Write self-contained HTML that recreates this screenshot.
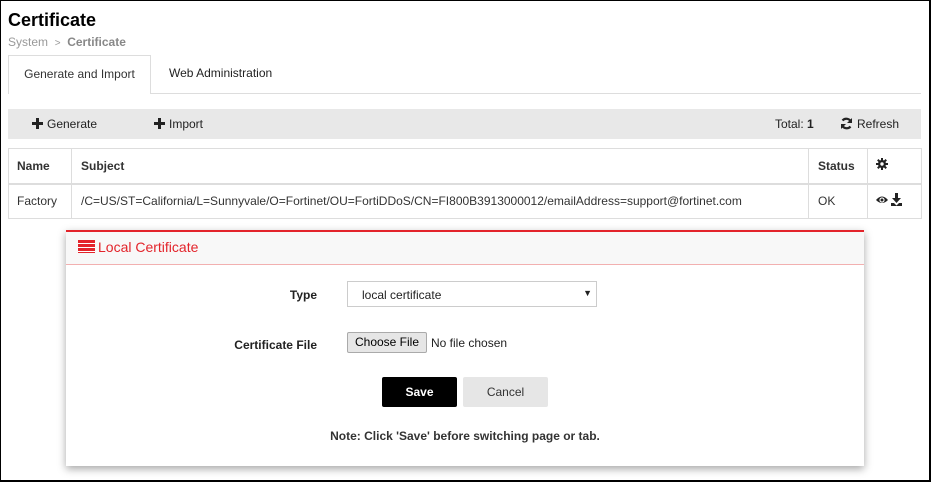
<!DOCTYPE html><html><head><style>
*{box-sizing:border-box;margin:0;padding:0}
body{width:935px;height:486px;background:#fff;font-family:"Liberation Sans",Arial,sans-serif;font-size:12px;color:#333;position:relative;overflow:hidden}
.frame{position:absolute;left:0;top:0;width:931px;height:482px;border:1px solid #000;border-width:1px 2px 2px 1px}
.a{position:absolute}
</style></head><body>
<div class="frame"></div>
<div class="a" style="left:8px;top:10px;font-size:18px;font-weight:bold;color:#000">Certificate</div>
<div class="a" style="left:8px;top:35px;font-size:12px;color:#999">System &nbsp;<span style="font-size:10px">&gt;</span>&nbsp; <b style="color:#888">Certificate</b></div>
<div class="a" style="left:8px;top:93px;width:913px;border-top:1px solid #ddd"></div>
<div class="a" style="left:8px;top:55px;width:143px;height:39px;border:1px solid #ddd;border-bottom:none;background:#fff;text-align:center;line-height:37px;color:#333">Generate and Import</div>
<div class="a" style="left:169px;top:55px;line-height:37px;color:#222">Web Administration</div>
<div class="a" style="left:8px;top:109px;width:913px;height:30px;background:#e8e8e8"></div>
<svg class="a" style="left:32px;top:118px" width="11" height="11"><path d="M4 0h3v4h4v3H7v4H4V7H0V4h4z" fill="#222"/></svg>
<div class="a" style="left:47px;top:117px;color:#222">Generate</div>
<svg class="a" style="left:154px;top:118px" width="11" height="11"><path d="M4 0h3v4h4v3H7v4H4V7H0V4h4z" fill="#222"/></svg>
<div class="a" style="left:169px;top:117px;color:#222">Import</div>
<div class="a" style="left:775px;top:117px;color:#222">Total: <b>1</b></div>
<svg class="a" style="left:840px;top:117px" width="13" height="13" viewBox="0 0 13 13"><path d="M11 5A5 5 0 0 0 2.5 3.5M2 8a5 5 0 0 0 8.5 1.5" stroke="#222" stroke-width="2.2" fill="none"/><path d="M12 1v5H7zM1 12V7h5z" fill="#222"/></svg>
<div class="a" style="left:857px;top:117px;color:#222">Refresh</div>
<table class="a" style="left:8px;top:148px;width:914px;border-collapse:collapse">
<tr style="height:35px"><th style="width:63px;text-align:left;padding-left:8px;border:1px solid #ddd;border-bottom:2px solid #ddd">Name</th><th style="text-align:left;padding-left:9px;border:1px solid #ddd;border-bottom:2px solid #ddd">Subject</th><th style="width:59px;text-align:left;padding-left:9px;border:1px solid #ddd;border-bottom:2px solid #ddd">Status</th><th style="width:54px;text-align:left;padding-left:8px;border:1px solid #ddd;border-bottom:2px solid #ddd"><svg width="12" height="12" viewBox="0 0 12 12"><path d="M5 0h2v12H5zM0 5h12v2H0z" fill="#222"/><path d="M5 0h2v12H5zM0 5h12v2H0z" fill="#222" transform="rotate(45 6 6)"/><circle cx="6" cy="6" r="4" fill="#222"/><circle cx="6" cy="6" r="1.7" fill="#fff"/></svg></th></tr>
<tr style="height:35px"><td style="padding-left:8px;border:1px solid #ddd">Factory</td><td style="padding-left:9px;border:1px solid #ddd">/C=US/ST=California/L=Sunnyvale/O=Fortinet/OU=FortiDDoS/CN=FI800B3913000012/emailAddress=support@fortinet.com</td><td style="padding-left:9px;border:1px solid #ddd">OK</td><td style="padding-left:8px;border:1px solid #ddd"><svg width="32" height="13" viewBox="0 0 32 13"><path d="M0 7Q6 0 12 7Q6 13 0 7z" fill="#222"/><circle cx="6" cy="7" r="2.6" fill="#fff"/><circle cx="6" cy="7" r="1.5" fill="#222"/><path d="M19 0h3v5h3l-4.5 5-4.5-5h3zM15 10h3l2.5 2.5 2.5-2.5h3v3H15z" fill="#222"/></svg></td></tr>
</table>
<div class="a" style="left:66px;top:230px;width:798px;height:236px;background:#fff;border-top:2px solid #e3242b;box-shadow:0 3px 8px rgba(0,0,0,.35)">
<div style="height:33px;background:#f8f8f8;border-bottom:1px solid #f2b0b0;position:relative">
<div class="a" style="left:12px;top:8px;width:17px;height:13px;background:repeating-linear-gradient(#e3242b 0 3px,#fff 3px 4px)"></div>
<div class="a" style="left:32px;top:7px;font-size:14px;color:#e3242b">Local Certificate</div></div>
<div class="a" style="left:0;top:56px;width:251px;text-align:right;font-weight:bold;color:#222">Type</div>
<div class="a" style="left:281px;top:49px;width:250px;height:26px;border:1px solid #ccc;padding:6px 14px;color:#222">local certificate<span style="position:absolute;right:4px;top:6px;font-size:9px">&#9660;</span></div>
<div class="a" style="left:0;top:106px;width:251px;text-align:right;font-weight:bold;color:#222">Certificate File</div>
<div class="a" style="left:281px;top:100px;width:80px;height:21px;border:1px solid #aaa;background:#e6e6e6;border-radius:2px;text-align:center;line-height:19px;color:#000">Choose File</div>
<div class="a" style="left:365px;top:104px;color:#222">No file chosen</div>
<div class="a" style="left:316px;top:145px;width:75px;height:30px;background:#000;color:#fff;font-weight:bold;text-align:center;line-height:30px;border-radius:2px">Save</div>
<div class="a" style="left:397px;top:145px;width:85px;height:30px;background:#e6e6e6;color:#333;text-align:center;line-height:30px;border-radius:2px">Cancel</div>
<div class="a" style="left:0;top:197px;width:798px;text-align:center;font-weight:bold;color:#333">Note: Click 'Save' before switching page or tab.</div>
</div>
</body></html>
